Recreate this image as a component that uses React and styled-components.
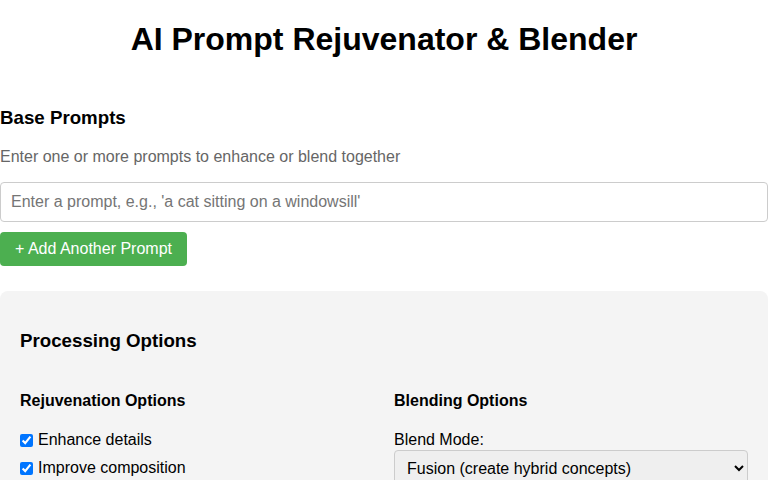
import React from "react";
import styled, { createGlobalStyle } from "styled-components";

const Global = createGlobalStyle`
  html, body { margin: 0; padding: 0; background: #fff; }
  body { font-family: "Liberation Sans", Arial, sans-serif; color: #000; }
`;

const Page = styled.div`
  width: 768px;
`;

const Title = styled.h1`
  font-size: 32px;
  text-align: center;
  margin: 21.44px 0 49px;
`;

const Section = styled.section`
  margin-bottom: 25px;
`;

const SectionTitle = styled.h3`
  font-size: 18.72px;
  margin: 18.72px 0;
`;

const Description = styled.p`
  color: #666;
  font-size: 16px;
  margin: 0 0 16px;
`;

const PromptInput = styled.input`
  display: block;
  box-sizing: border-box;
  width: 100%;
  height: 40px;
  padding: 10px;
  font-family: inherit;
  font-size: 16px;
  border: 1px solid #ccc;
  border-radius: 4px;
  margin: 0 0 10px;
  &::placeholder { color: #757575; }
`;

const AddButton = styled.button`
  background: #4caf50;
  color: #fff;
  border: none;
  border-radius: 4px;
  padding: 8px 15px;
  height: 34px;
  font-family: inherit;
  font-size: 16px;
  cursor: pointer;
`;

const Panel = styled.div`
  background: #f4f4f4;
  border-radius: 8px;
  padding: 20px;
`;

const Columns = styled.div`
  display: grid;
  grid-template-columns: 1fr 1fr;
  gap: 20px;
`;

const Column = styled.div``;

const ColumnTitle = styled.h4`
  font-size: 16px;
  margin: 21.28px 0;
`;

const CheckRow = styled.label`
  display: flex;
  align-items: center;
  gap: 5px;
  font-size: 16px;
  height: 18px;
  margin-bottom: 10px;
  input { margin: 0; width: 13px; height: 13px; }
`;

const FieldLabel = styled.label`
  display: block;
  font-size: 16px;
  line-height: 18.4px;
`;

const Select = styled.select`
  display: block;
  width: 100%;
  box-sizing: border-box;
  padding: 8px;
  font-family: inherit;
  font-size: 16px;
  border: 1px solid #ccc;
  border-radius: 4px;
  background-color: #efefef;
  color: #000;
`;

export default function App() {
  return (
    <Page>
      <Global />
      <Title>AI Prompt Rejuvenator &amp; Blender</Title>
      <Section>
        <SectionTitle>Base Prompts</SectionTitle>
        <Description>Enter one or more prompts to enhance or blend together</Description>
        <PromptInput placeholder="Enter a prompt, e.g., 'a cat sitting on a windowsill'" />
        <AddButton>+ Add Another Prompt</AddButton>
      </Section>
      <Panel>
        <SectionTitle>Processing Options</SectionTitle>
        <Columns>
          <Column>
            <ColumnTitle>Rejuvenation Options</ColumnTitle>
            <CheckRow><input type="checkbox" defaultChecked />Enhance details</CheckRow>
            <CheckRow><input type="checkbox" defaultChecked />Improve composition</CheckRow>
            <CheckRow><input type="checkbox" defaultChecked />Add artistic style</CheckRow>
          </Column>
          <Column>
            <ColumnTitle>Blending Options</ColumnTitle>
            <FieldLabel>Blend Mode:</FieldLabel>
            <Select defaultValue="fusion">
              <option value="fusion">Fusion (create hybrid concepts)</option>
            </Select>
          </Column>
        </Columns>
      </Panel>
    </Page>
  );
}
